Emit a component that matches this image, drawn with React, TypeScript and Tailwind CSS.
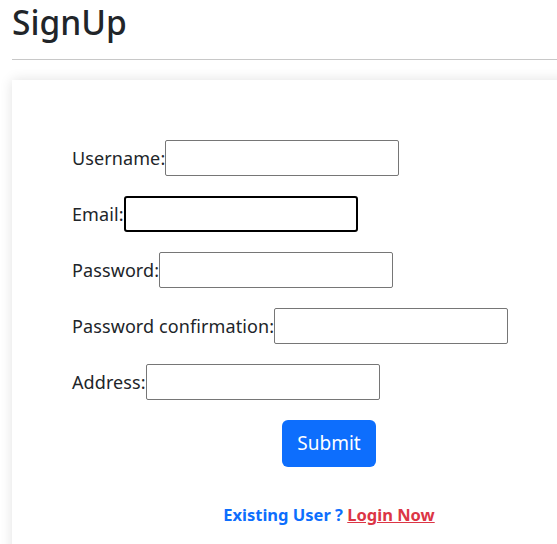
const fields = [
  { label: "Username", focused: false },
  { label: "Email", focused: true },
  { label: "Password", focused: false },
  { label: "Password confirmation", focused: false },
  { label: "Address", focused: false },
];

const SignUp = () => {
  return (
    <div className="w-[658px] px-3 text-[#212529] font-['Noto_Sans',sans-serif]">
      <h2 className="pt-[3px] text-[33.5px] leading-[38px] font-medium">SignUp</h2>
      <hr className="mt-[18px] border-t border-[#c8c8c8]" />
      <div className="mt-5 bg-white shadow-[0_0_12px_rgba(0,0,0,0.12)] pt-[60px] pb-10">
        <form className="flex flex-col">
          {fields.map((f) => (
            <div key={f.label} className="flex items-center pl-[60px] mb-5 text-[18px] tracking-[0.1px]">
              <label>{f.label}:</label>
              <input
                className={
                  f.focused
                    ? "w-[234px] h-9 border-2 border-black rounded-[3px] outline-none"
                    : "w-[234px] h-9 border border-[#767676] rounded-[2px] outline-none"
                }
              />
            </div>
          ))}
          <div className="flex justify-center">
            <button
              type="button"
              className="w-[94px] h-[47px] bg-[#0d6efd] text-white text-[19px] rounded-md"
            >
              Submit
            </button>
          </div>
          <p className="mt-[36px] text-center text-[16.5px] font-bold text-[#0d6efd]">
            Existing User ?{" "}
            <a href="#" className="text-[#dc3545] underline">
              Login Now
            </a>
          </p>
        </form>
      </div>
    </div>
  );
};

export default function App() {
  return (
    <div className="w-[557px] h-[544px] overflow-hidden bg-white">
      <SignUp />
    </div>
  );
}
